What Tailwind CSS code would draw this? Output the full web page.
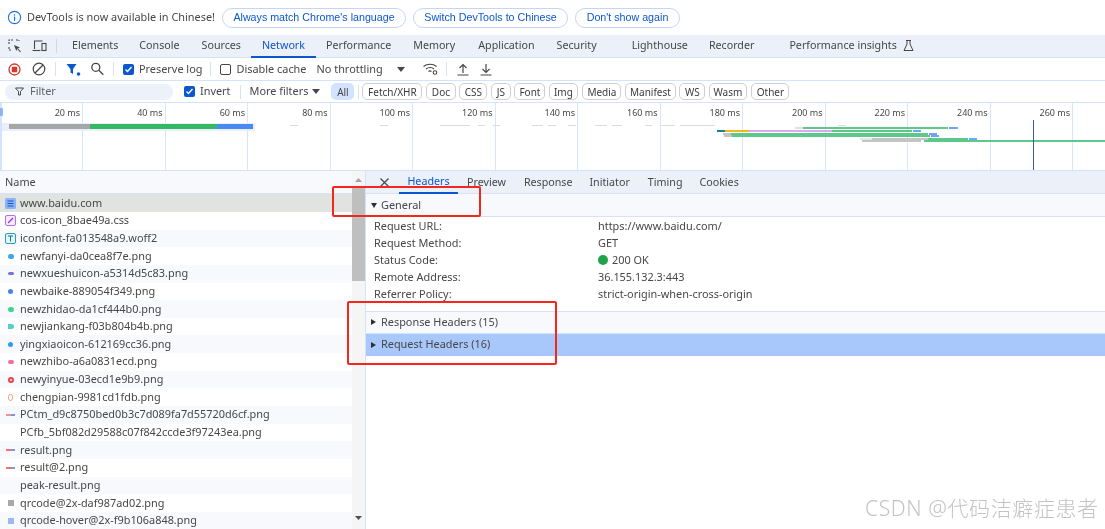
<!doctype html>
<html><head><meta charset="utf-8"><script src="https://cdn.jsdelivr.net/npm/@tailwindcss/browser@4"></script></head>
<body class="m-0">
<div class="relative w-[1105px] h-[529px] overflow-hidden bg-white font-['Noto_Sans','Noto_Sans_CJK_SC',sans-serif] text-[10.900px] text-[#474747] leading-none blur-[0.35px]">

<!-- infobar -->
<div class="h-[35px] flex items-center pl-[7px] bg-white">
  <svg class="w-[15px] h-[15px] shrink-0" viewBox="0 0 16 16" fill="none"><circle cx="8" cy="8" r="6.5" stroke="#1a73e8" stroke-width="1.2"/><rect x="7.4" y="7" width="1.3" height="4.6" fill="#1a73e8"/><rect x="7.4" y="4.6" width="1.3" height="1.4" fill="#1a73e8"/></svg>
  <span class="ml-[5px] w-[195px] whitespace-nowrap">DevTools is now available in Chinese!</span>
  <button class="h-[20px] w-[184px] rounded-full border border-[#c2d7f8] text-[#0b57d0] font-['Liberation_Sans',sans-serif] text-[10.700px]">Always match Chrome's language</button>
  <button class="ml-[7px] h-[20px] w-[155px] rounded-full border border-[#c2d7f8] text-[#0b57d0] font-['Liberation_Sans',sans-serif] text-[10.700px]">Switch DevTools to Chinese</button>
  <button class="ml-[7px] h-[20px] w-[105px] rounded-full border border-[#c2d7f8] text-[#0b57d0] font-['Liberation_Sans',sans-serif] text-[10.700px]">Don't show again</button>
</div>

<!-- main tabs -->
<div class="h-[23px] flex items-stretch bg-[#ebf0f9] border-b border-[#d6e2f6] whitespace-nowrap text-[10.700px]">
  <div class="w-[62px] flex items-center pl-[8px] gap-[10px]">
    <svg class="w-[14px] h-[14px]" viewBox="0 0 14 14" fill="none" stroke="#474747" stroke-width="1.1"><path d="M1 5V1h4M8 1h3v1M1 8v3h2" stroke-dasharray="2 1"/><path d="M6 6l6 2.5-2.6 1L8.300 12z" fill="#474747" stroke="none"/><path d="M9.500 9.500L12.500 13"/></svg>
    <svg class="w-[15px] h-[14px]" viewBox="0 0 15 14" fill="none" stroke="#474747" stroke-width="1.1"><path d="M2.500 10V2h8"/><path d="M0.500 11.500h8"/><rect x="10" y="4.500" width="4" height="7"/></svg>
    <div class="ml-[-1px] w-px h-[14px] bg-[#d0d8e6] self-center"></div>
  </div>
  <div class="flex items-center pb-[2px] ml-[10px]">Elements</div>
  <div class="flex items-center pb-[2px] ml-[21px]">Console</div>
  <div class="flex items-center pb-[2px] ml-[22px]">Sources</div>
  <div class="flex items-center justify-center pb-[1px] ml-[10px] w-[65px] text-[#0b57d0] border-b-2 border-[#0b57d0] mb-[-1px]">Network</div>
  <div class="flex items-center pb-[2px] ml-[10px]">Performance</div>
  <div class="flex items-center pb-[2px] ml-[22px]">Memory</div>
  <div class="flex items-center pb-[2px] ml-[23px]">Application</div>
  <div class="flex items-center pb-[2px] ml-[22px]">Security</div>
  <div class="flex items-center pb-[2px] ml-[35px]">Lighthouse</div>
  <div class="flex items-center pb-[2px] ml-[21px]">Recorder</div>
  <div class="flex items-center pb-[2px] gap-[6px] ml-[35px]">Performance insights
    <svg class="w-[11px] h-[11px]" viewBox="0 0 11 11" fill="none" stroke="#474747" stroke-width="1"><path d="M3 .5h5M4 .5v3.500L1 10.500h9L7 4V.5"/></svg>
  </div>
</div>

<!-- toolbar -->
<div class="h-[23px] flex items-center bg-white border-b border-[#d3e3fd] whitespace-nowrap">
  <svg class="ml-[8px] w-[13px] h-[13px]" viewBox="0 0 13 13" fill="none"><circle cx="6.500" cy="6.500" r="5.500" stroke="#dc362e" stroke-width="1.300"/><rect x="3.800" y="3.800" width="5.400" height="5.400" rx="1" fill="#dc362e"/></svg>
  <svg class="ml-[11px] w-[14px] h-[14px]" viewBox="0 0 14 14" fill="none" stroke="#474747" stroke-width="1.200"><circle cx="7" cy="7" r="5.800"/><path d="M3 11L11 3"/></svg>
  <div class="ml-[9px] w-px h-[14px] bg-[#d6e2f6]"></div>
  <svg class="ml-[10px] w-[15px] h-[13px]" viewBox="0 0 15 13"><path d="M0.500 1h10L7 6v5L4.500 9.500V6z" fill="#0b57d0"/><circle cx="12.500" cy="11" r="1.800" fill="#0b57d0"/></svg>
  <svg class="ml-[9px] w-[14px] h-[14px]" viewBox="0 0 14 14" fill="none" stroke="#474747" stroke-width="1.300"><circle cx="5.800" cy="5.300" r="4"/><path d="M8.800 8.300l4.500 4.500"/></svg>
  <div class="ml-[9px] w-px h-[14px] bg-[#d6e2f6]"></div>
  <div class="ml-[9px] w-[11px] h-[11px] rounded-[2px] bg-[#0b57d0] flex items-center justify-center"><svg class="w-[9px] h-[9px]" viewBox="0 0 9 9" fill="none" stroke="#fff" stroke-width="1.400"><path d="M1.500 4.500l2 2 4-4.500"/></svg></div>
  <span class="ml-[5px]">Preserve log</span>
  <div class="ml-[8px] w-px h-[14px] bg-[#d6e2f6]"></div>
  <div class="ml-[9px] w-[11px] h-[11px] rounded-[2px] border border-[#474747]"></div>
  <span class="ml-[5px]">Disable cache</span>
  <span class="ml-[10px]">No throttling</span>
  <svg class="ml-[14px] w-[8px] h-[5px]" viewBox="0 0 8 5"><path d="M0 0h8L4 5z" fill="#474747"/></svg>
  <svg class="ml-[18px] w-[15px] h-[12px]" viewBox="0 0 15 12" fill="none" stroke="#474747" stroke-width="1.100"><path d="M.5 3.500C4 .5 10 .5 13.500 3.500M3 6c2.500-2 6-2 8 0M5.500 8.500c1-.8 2-.8 3 0"/><circle cx="12" cy="9.500" r="1.800"/></svg>
  <div class="ml-[8px] w-px h-[14px] bg-[#d6e2f6]"></div>
  <svg class="ml-[10px] w-[12px] h-[13px]" viewBox="0 0 12 13" fill="none" stroke="#474747" stroke-width="1.200"><path d="M6 10V1.500M2.500 5L6 1.500 9.500 5M.5 12h11"/></svg>
  <svg class="ml-[11px] w-[12px] h-[13px]" viewBox="0 0 12 13" fill="none" stroke="#474747" stroke-width="1.200"><path d="M6 1v8.500M2.500 6L6 9.500 9.500 6M.5 12h11"/></svg>
</div>

<!-- filter bar -->
<div class="h-[22px] flex items-center bg-white border-b border-[#d3e3fd] whitespace-nowrap">
  <div class="ml-[5px] w-[168px] h-[16px] rounded-full bg-[#edf1fa] flex items-center pl-[10px] gap-[6px] text-[#5f6368]">
    <svg class="w-[9px] h-[9px]" viewBox="0 0 9 9" fill="none" stroke="#474747"><path d="M.5 1h8L5.500 4.500V8h-2V4.500z"/></svg>
    <span>Filter</span>
  </div>
  <div class="ml-[11px] w-[11px] h-[11px] rounded-[2px] bg-[#0b57d0] flex items-center justify-center"><svg class="w-[9px] h-[9px]" viewBox="0 0 9 9" fill="none" stroke="#fff" stroke-width="1.400"><path d="M1.500 4.500l2 2 4-4.500"/></svg></div>
  <span class="ml-[5px]">Invert</span>
  <div class="ml-[9px] w-px h-[14px] bg-[#d6e2f6]"></div>
  <span class="ml-[9px]">More filters</span>
  <svg class="ml-[4px] w-[8px] h-[5px]" viewBox="0 0 8 5"><path d="M0 0h8L4 5z" fill="#474747"/></svg>
  <div class="ml-[11px] w-[23px] h-[17px] rounded-[5px] bg-[#d3e3fd] flex items-center justify-center text-[10px]">All</div>
  <div class="ml-[4px] w-px h-[14px] bg-[#d6e2f6]"></div>
  <div class="ml-[3px] flex gap-[3.500px] text-[10px] text-[#3c3c3c]">
    <div class="w-[60px] h-[17px] rounded-[5px] border border-[#cfcfcf] flex items-center justify-center">Fetch/XHR</div>
    <div class="w-[30px] h-[17px] rounded-[5px] border border-[#cfcfcf] flex items-center justify-center">Doc</div>
    <div class="w-[28px] h-[17px] rounded-[5px] border border-[#cfcfcf] flex items-center justify-center">CSS</div>
    <div class="w-[20px] h-[17px] rounded-[5px] border border-[#cfcfcf] flex items-center justify-center">JS</div>
    <div class="w-[31px] h-[17px] rounded-[5px] border border-[#cfcfcf] flex items-center justify-center">Font</div>
    <div class="w-[29px] h-[17px] rounded-[5px] border border-[#cfcfcf] flex items-center justify-center">Img</div>
    <div class="ml-[1px] w-[39px] h-[17px] rounded-[5px] border border-[#cfcfcf] flex items-center justify-center">Media</div>
    <div class="w-[51px] h-[17px] rounded-[5px] border border-[#cfcfcf] flex items-center justify-center">Manifest</div>
    <div class="w-[26px] h-[17px] rounded-[5px] border border-[#cfcfcf] flex items-center justify-center">WS</div>
    <div class="w-[38px] h-[17px] rounded-[5px] border border-[#cfcfcf] flex items-center justify-center">Wasm</div>
    <div class="ml-[1px] w-[38px] h-[17px] rounded-[5px] border border-[#cfcfcf] flex items-center justify-center">Other</div>
  </div>
</div>

<!-- overview -->
<div class="relative h-[68px] bg-white border-b border-[#d3e3fd] overflow-hidden">
  <div class="absolute left-0 top-0 bottom-0 w-[2px] bg-[#d3e3fd]"></div>
  <div class="absolute left-0 top-[5px] w-[3px] h-[8px] rounded-r-[1px] bg-[#8ab4f8]"></div>
  <div class="flex h-full pl-[0.500px] text-[9px] text-[#474747]">
    <div class="w-[82.500px] shrink-0 border-r border-[#d9e5fb] text-right pr-[2px] pt-[5px]">20 ms</div>
    <div class="w-[82.500px] shrink-0 border-r border-[#d9e5fb] text-right pr-[2px] pt-[5px]">40 ms</div>
    <div class="w-[82.500px] shrink-0 border-r border-[#d9e5fb] text-right pr-[2px] pt-[5px]">60 ms</div>
    <div class="w-[82.500px] shrink-0 border-r border-[#d9e5fb] text-right pr-[2px] pt-[5px]">80 ms</div>
    <div class="w-[82.500px] shrink-0 border-r border-[#d9e5fb] text-right pr-[2px] pt-[5px]">100 ms</div>
    <div class="w-[82.500px] shrink-0 border-r border-[#d9e5fb] text-right pr-[2px] pt-[5px]">120 ms</div>
    <div class="w-[82.500px] shrink-0 border-r border-[#d9e5fb] text-right pr-[2px] pt-[5px]">140 ms</div>
    <div class="w-[82.500px] shrink-0 border-r border-[#d9e5fb] text-right pr-[2px] pt-[5px]">160 ms</div>
    <div class="w-[82.500px] shrink-0 border-r border-[#d9e5fb] text-right pr-[2px] pt-[5px]">180 ms</div>
    <div class="w-[82.500px] shrink-0 border-r border-[#d9e5fb] text-right pr-[2px] pt-[5px]">200 ms</div>
    <div class="w-[82.500px] shrink-0 border-r border-[#d9e5fb] text-right pr-[2px] pt-[5px]">220 ms</div>
    <div class="w-[82.500px] shrink-0 border-r border-[#d9e5fb] text-right pr-[2px] pt-[5px]">240 ms</div>
    <div class="w-[82.500px] shrink-0 border-r border-[#d9e5fb] text-right pr-[2px] pt-[5px]">260 ms</div>
    <div class="w-[82.500px] shrink-0 border-r border-[#d9e5fb]"></div>
  </div>
  <!-- waterfall: y relative to 103 -->
  <div class="absolute left-[2px] w-[253px] top-[20px] h-[8px] bg-[#e8f0fe]"></div>
  <div class="absolute left-[9px] w-[81px] top-[21px] h-[5px] bg-[#a6a6a6]"></div>
  <div class="absolute left-[90px] w-[127px] top-[21px] h-[5px] bg-[#34b864]"></div>
  <div class="absolute left-[217px] w-[36px] top-[21px] h-[5px] bg-[#4a8af0]"></div>

  <div class="absolute left-[290px] w-[8px] top-[22px] h-px bg-[#dcdcdc]"></div>
  <div class="absolute left-[380px] w-[8px] top-[22px] h-px bg-[#dcdcdc]"></div>
  <div class="absolute left-[440px] w-[30px] top-[22px] h-px bg-[#dcdcdc]"></div>
  <div class="absolute left-[478px] w-[7px] top-[22px] h-px bg-[#dcdcdc]"></div>
  <div class="absolute left-[493px] w-[7px] top-[22px] h-px bg-[#dcdcdc]"></div>
  <div class="absolute left-[532px] w-[11px] top-[22px] h-px bg-[#dcdcdc]"></div>
  <div class="absolute left-[548px] w-[8px] top-[22px] h-px bg-[#dcdcdc]"></div>
  <div class="absolute left-[568px] w-[8px] top-[22px] h-px bg-[#dcdcdc]"></div>
  <div class="absolute left-[595px] w-[12px] top-[22px] h-px bg-[#dcdcdc]"></div>
  <div class="absolute left-[612px] w-[10px] top-[22px] h-px bg-[#dcdcdc]"></div>
  <div class="absolute left-[645px] w-[7px] top-[22px] h-px bg-[#dcdcdc]"></div>
  <div class="absolute left-[660px] w-[15px] top-[22px] h-px bg-[#dcdcdc]"></div>
  <div class="absolute left-[680px] w-[35px] top-[22px] h-px bg-[#dcdcdc]"></div>
  <div class="absolute left-[838px] w-[8px] top-[22px] h-px bg-[#dcdcdc]"></div>

  <div class="absolute left-[795px] w-[8px] top-[24px] h-[2px] bg-[#e0e0e0]"></div>
  <div class="absolute left-[803px] w-[145px] top-[24px] h-[2px] bg-[#5cc98a]"></div>
  <div class="absolute left-[949px] w-[9px] top-[24px] h-[2px] bg-[#6fa3f5]"></div>

  <div class="absolute left-[717px] w-[8px] top-[27px] h-[2px] bg-[#1a7f94]"></div>
  <div class="absolute left-[725px] w-[24px] top-[27px] h-[2px] bg-[#f2b81f]"></div>
  <div class="absolute left-[749px] w-[83px] top-[27px] h-[2px] bg-[#dfa6f5]"></div>
  <div class="absolute left-[832px] w-[80px] top-[27px] h-[2px] bg-[#5cc98a]"></div>
  <div class="absolute left-[913px] w-[8px] top-[27px] h-[2px] bg-[#6fa3f5]"></div>

  <div class="absolute left-[723px] w-[8px] top-[30px] h-[2px] bg-[#c4c4c4]"></div>
  <div class="absolute left-[731px] w-[197px] top-[30px] h-[2px] bg-[#5cc98a]"></div>
  <div class="absolute left-[929px] w-[8px] top-[30px] h-[2px] bg-[#6fa3f5]"></div>

  <div class="absolute left-[724px] w-[8px] top-[32px] h-[2px] bg-[#c4c4c4]"></div>
  <div class="absolute left-[732px] w-[198px] top-[32px] h-[2px] bg-[#5cc98a]"></div>
  <div class="absolute left-[931px] w-[8px] top-[32px] h-[2px] bg-[#6fa3f5]"></div>

  <div class="absolute left-[860px] w-[12px] top-[35px] h-[2px] bg-[#e4e4e4]"></div>
  <div class="absolute left-[872px] w-[56px] top-[35px] h-[2px] bg-[#c4c4c4]"></div>
  <div class="absolute left-[928px] w-[40px] top-[35px] h-[2px] bg-[#5cc98a]"></div>
  <div class="absolute left-[969px] w-[8px] top-[35px] h-[2px] bg-[#6fa3f5]"></div>

  <div class="absolute left-[862px] w-[59px] top-[37px] h-[2px] bg-[#c4c4c4]"></div>
  <div class="absolute left-[924px] w-[181px] top-[37px] h-[2px] bg-[#5cc98a]"></div>

  <div class="absolute left-[1033px] w-px top-[17px] bottom-0 bg-[#3b5fa0]"></div>
</div>

<!-- split -->
<div class="flex h-[358px]">
  <!-- left: list -->
  <div class="w-[352px] shrink-0 flex flex-col whitespace-nowrap">
    <div class="h-[23px] shrink-0 flex items-center pl-[5px] bg-[#f8f9fd] border-b border-[#d6e2f6]">Name</div>
    <div class="flex flex-col">
      <div class="h-[18px] flex items-center bg-[#e1e3e1] pl-[5px] gap-[4px]"><svg class="w-[11px] h-[11px]" viewBox="0 0 11 11"><rect width="11" height="11" rx="1.500" fill="#8ab4f8"/><path d="M2.500 3h6M2.500 5.500h6M2.500 8h6" stroke="#1a56c4"/></svg>www.baidu.com</div>
      <div class="h-[17.650px] flex items-center bg-white pl-[5px] gap-[4px]"><svg class="w-[11px] h-[11px]" viewBox="0 0 11 11"><rect x=".5" y=".5" width="10" height="10" rx="1.500" fill="#f6ecff" stroke="#b46cf0"/><path d="M3 8l5-5" stroke="#9334e6" stroke-width="1.200"/></svg>cos-icon_8bae49a.css</div>
      <div class="h-[17.650px] flex items-center bg-[#f8f9fd] pl-[5px] gap-[4px]"><svg class="w-[11px] h-[11px]" viewBox="0 0 11 11"><rect x=".5" y=".5" width="10" height="10" rx="1.500" fill="#e3f5f7" stroke="#28a0b4"/><path d="M3 3h5M5.500 3v5.500" stroke="#12788c"/></svg>iconfont-fa013548a9.woff2</div>
      <div class="h-[17.650px] flex items-center bg-white pl-[5px] gap-[4px]"><div class="w-[11px] flex justify-center"><div class="w-[6px] h-[5px] rounded-full bg-[#3aa8ee]"></div></div>newfanyi-da0cea8f7e.png</div>
      <div class="h-[17.650px] flex items-center bg-[#f8f9fd] pl-[5px] gap-[4px]"><div class="w-[11px] flex justify-center"><div class="w-[6px] h-[3px] rounded-full bg-[#7b72e0]"></div></div>newxueshuicon-a5314d5c83.png</div>
      <div class="h-[17.650px] flex items-center bg-white pl-[5px] gap-[4px]"><div class="w-[11px] flex justify-center"><div class="w-[5px] h-[5px] rounded-full bg-[#4a7ff0]"></div></div>newbaike-889054f349.png</div>
      <div class="h-[17.650px] flex items-center bg-[#f8f9fd] pl-[5px] gap-[4px]"><div class="w-[11px] flex justify-center"><div class="w-[6px] h-[5px] rounded-full bg-[#3ed68a]"></div></div>newzhidao-da1cf444b0.png</div>
      <div class="h-[17.650px] flex items-center bg-white pl-[5px] gap-[4px]"><div class="w-[11px] flex justify-center"><div class="w-[6px] h-[5px] rounded-r-full bg-[#4fd0c8]"></div></div>newjiankang-f03b804b4b.png</div>
      <div class="h-[17.650px] flex items-center bg-[#f8f9fd] pl-[5px] gap-[4px]"><div class="w-[11px] flex justify-center"><div class="w-[5px] h-[5px] rounded-full bg-[#2d9cf0]"></div></div>yingxiaoicon-612169cc36.png</div>
      <div class="h-[17.650px] flex items-center bg-white pl-[5px] gap-[4px]"><div class="w-[11px] flex justify-center"><div class="w-[6px] h-[4px] rounded-full bg-[#f56ca5]"></div></div>newzhibo-a6a0831ecd.png</div>
      <div class="h-[17.650px] flex items-center bg-[#f8f9fd] pl-[5px] gap-[4px]"><div class="w-[11px] flex justify-center"><div class="w-[6px] h-[6px] rounded-full border-2 border-[#ee3f4d]"></div></div>newyinyue-03ecd1e9b9.png</div>
      <div class="h-[17.650px] flex items-center bg-white pl-[5px] gap-[4px]"><div class="w-[11px] flex justify-center"><div class="w-[5px] h-[7px] rounded-full border-[1.500px] border-[#f5a070]"></div></div>chengpian-9981cd1fdb.png</div>
      <div class="h-[17.650px] flex items-center bg-[#f8f9fd] pl-[6px] gap-[5px]"><div class="w-[9px] h-[2px] flex"><div class="w-1/2 bg-[#f59090]"></div><div class="w-1/2 bg-[#7f96e8]"></div></div>PCtm_d9c8750bed0b3c7d089fa7d55720d6cf.png</div>
      <div class="h-[17.650px] flex items-center bg-white pl-[20px]">PCfb_5bf082d29588c07f842ccde3f97243ea.png</div>
      <div class="h-[17.650px] flex items-center bg-[#f8f9fd] pl-[6px] gap-[5px]"><div class="w-[9px] h-[2px] flex"><div class="w-1/2 bg-[#f57070]"></div><div class="w-1/2 bg-[#7f96e8]"></div></div>result.png</div>
      <div class="h-[17.650px] flex items-center bg-white pl-[6px] gap-[5px]"><div class="w-[9px] h-[2px] flex"><div class="w-1/2 bg-[#f57070]"></div><div class="w-1/2 bg-[#7f96e8]"></div></div>result@2.png</div>
      <div class="h-[17.650px] flex items-center bg-[#f8f9fd] pl-[20px]">peak-result.png</div>
      <div class="h-[17.650px] flex items-center bg-white pl-[5px] gap-[4px]"><div class="w-[11px] flex justify-center"><div class="w-[6px] h-[6px] bg-[#a8a8a8]"></div></div>qrcode@2x-daf987ad02.png</div>
      <div class="h-[17.650px] flex items-center bg-[#f8f9fd] pl-[5px] gap-[4px]"><div class="w-[11px] flex justify-center"><div class="w-[6px] h-[6px] bg-[#9db8f5]"></div></div>qrcode-hover@2x-f9b106a848.png</div>
    </div>
  </div>
  <!-- scrollbar -->
  <div class="w-[14px] shrink-0 bg-[#f5f5f5] border-r border-[#d6e2f6] flex flex-col items-center relative">
    <svg class="mt-[7px] w-[7px] h-[4px]" viewBox="0 0 7 4"><path d="M0 4h7L3.500 0z" fill="#a3a3a3"/></svg>
    <div class="mt-[4px] w-[13px] h-[95px] bg-[#bfbfbf] self-start"></div>
    <svg class="absolute top-[345px] w-[7px] h-[4px]" viewBox="0 0 7 4"><path d="M0 0h7L3.500 4z" fill="#505050"/></svg>
  </div>
  <!-- right -->
  <div class="flex-1 flex flex-col whitespace-nowrap">
    <div class="h-[23px] flex items-stretch bg-[#ebf0f9] border-b border-[#d6e2f6] text-[10.700px]">
      <svg class="ml-[14px] w-[9px] h-[9px] self-center" viewBox="0 0 9 9" fill="none" stroke="#474747" stroke-width="1.200"><path d="M.5.5l8 8M8.500.5l-8 8"/></svg>
      <div class="ml-[10px] w-[59px] flex items-center justify-center text-[#0b57d0] border-b-2 border-[#0b57d0] mb-[-1px]">Headers</div>
      <div class="flex items-center ml-[9px]">Preview</div>
      <div class="flex items-center ml-[18px]">Response</div>
      <div class="flex items-center ml-[17px]">Initiator</div>
      <div class="flex items-center ml-[18px]">Timing</div>
      <div class="flex items-center ml-[17px]">Cookies</div>
    </div>
    <div class="h-[23px] flex items-center bg-[#f8f9fd] border-b border-[#d6e2f6] pl-[5px]">
      <svg class="w-[6px] h-[5px]" viewBox="0 0 6 5"><path d="M0 0h6L3 5z" fill="#303030"/></svg>
      <span class="ml-[4px]">General</span>
    </div>
    <div class="pt-[1.500px] flex flex-col h-[94px]">
      <div class="h-[16.800px] flex items-center pl-[8px]"><span class="w-[224px]">Request URL:</span><span>https://www.baidu.com/</span></div>
      <div class="h-[16.800px] flex items-center pl-[8px]"><span class="w-[224px]">Request Method:</span><span>GET</span></div>
      <div class="h-[16.800px] flex items-center pl-[8px]"><span class="w-[224px]">Status Code:</span><span class="w-[10px] h-[10px] rounded-full bg-[#1ea446] mr-[4px]"></span><span>200 OK</span></div>
      <div class="h-[16.800px] flex items-center pl-[8px]"><span class="w-[224px]">Remote Address:</span><span>36.155.132.3:443</span></div>
      <div class="h-[16.800px] flex items-center pl-[8px]"><span class="w-[224px]">Referrer Policy:</span><span>strict-origin-when-cross-origin</span></div>
    </div>
    <div class="h-[23px] flex items-center bg-[#f8f9fd] border-y border-[#d6e2f6] pl-[5px] pb-[1px]">
      <svg class="w-[5px] h-[6px]" viewBox="0 0 5 6"><path d="M0 0v6l5-3z" fill="#303030"/></svg>
      <span class="ml-[5px]">Response Headers (15)</span>
    </div>
    <div class="h-[22px] flex items-center bg-[#a8c7fa] pl-[5px] pb-[1px]">
      <svg class="w-[5px] h-[6px]" viewBox="0 0 5 6"><path d="M0 0v6l5-3z" fill="#303030"/></svg>
      <span class="ml-[5px]">Request Headers (16)</span>
    </div>
  </div>
</div>

<!-- annotations -->
<div class="absolute left-[332px] top-[186px] w-[149px] h-[31px] border-2 border-[#f5261c] rounded-[2px]"></div>
<div class="absolute left-[347px] top-[301px] w-[210px] h-[64px] border-2 border-[#f5261c] rounded-[2px]"></div>
<div class="absolute left-[865px] top-[498px] text-[21px] font-light text-[#c4c4c4] whitespace-nowrap tracking-[0.600px]">CSDN @代码洁癖症患者</div>
</div>
</body></html>
